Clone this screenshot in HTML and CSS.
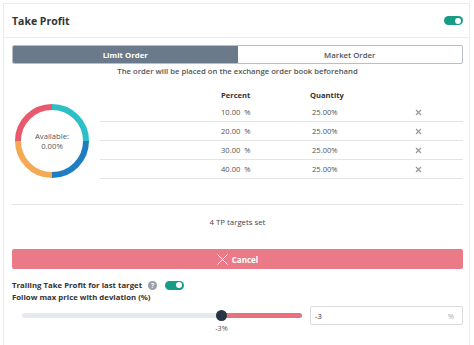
FILE: index.html
```html
<!DOCTYPE html>
<html lang="en">
<head>
    <meta charset="UTF-8">
    <title>Take Profit</title>
    <link rel="stylesheet" href="styles.css">
</head>
<body>
    <div class="card">
        <div class="card-header">
            <span class="card-title">Take Profit</span>
            <span class="toggle"></span>
        </div>
        <div class="card-body">
            <div class="tabs">
                <div class="tab active">Limit Order</div>
                <div class="tab">Market Order</div>
            </div>
            <p class="subtitle">The order will be placed on the exchange order book beforehand</p>

            <div class="targets">
                <div class="donut">
                    <svg width="74" height="74" viewBox="0 0 74 74">
                        <path d="M37 3 A34 34 0 0 1 71 37" fill="none" stroke="#2cbfc6" stroke-width="6"/>
                        <path d="M71 37 A34 34 0 0 1 37 71" fill="none" stroke="#1f7dc2" stroke-width="6"/>
                        <path d="M37 71 A34 34 0 0 1 3 37" fill="none" stroke="#f4aa55" stroke-width="6"/>
                        <path d="M3 37 A34 34 0 0 1 37 3" fill="none" stroke="#e8596d" stroke-width="6"/>
                    </svg>
                    <div class="donut-label">Available:<br>0.00%</div>
                </div>
                <div class="tp-table">
                    <div class="tp-row tp-head">
                        <span class="col-pct">Percent</span>
                        <span class="col-qty">Quantity</span>
                    </div>
                    <div class="tp-row">
                        <span class="col-pct">10.00 &nbsp;%</span>
                        <span class="col-qty">25.00%</span>
                        <span class="col-del"><svg width="7" height="7" viewBox="0 0 7 7"><path d="M1 1 L6 6 M6 1 L1 6" stroke="#999" stroke-width="1.2"/></svg></span>
                    </div>
                    <div class="tp-row">
                        <span class="col-pct">20.00 &nbsp;%</span>
                        <span class="col-qty">25.00%</span>
                        <span class="col-del"><svg width="7" height="7" viewBox="0 0 7 7"><path d="M1 1 L6 6 M6 1 L1 6" stroke="#999" stroke-width="1.2"/></svg></span>
                    </div>
                    <div class="tp-row">
                        <span class="col-pct">30.00 &nbsp;%</span>
                        <span class="col-qty">25.00%</span>
                        <span class="col-del"><svg width="7" height="7" viewBox="0 0 7 7"><path d="M1 1 L6 6 M6 1 L1 6" stroke="#999" stroke-width="1.2"/></svg></span>
                    </div>
                    <div class="tp-row">
                        <span class="col-pct">40.00 &nbsp;%</span>
                        <span class="col-qty">25.00%</span>
                        <span class="col-del"><svg width="7" height="7" viewBox="0 0 7 7"><path d="M1 1 L6 6 M6 1 L1 6" stroke="#999" stroke-width="1.2"/></svg></span>
                    </div>
                </div>
            </div>

            <div class="targets-count">4 TP targets set</div>

            <button class="cancel-btn">
                <svg width="11" height="11" viewBox="0 0 11 11"><path d="M0.5 0.5 L10.5 10.5 M10.5 0.5 L0.5 10.5" stroke="#fff" stroke-width="1"/></svg>
                Cancel
            </button>

            <div class="trailing">
                <span class="label">Trailing Take Profit for last target</span>
                <span class="help">?</span>
                <span class="toggle small"></span>
            </div>
            <div class="label">Follow max price with deviation (%)</div>

            <div class="deviation">
                <div class="slider">
                    <div class="track">
                        <div class="track-fill" style="width: 29%"></div>
                        <div class="thumb" style="left: 71%"></div>
                        <div class="thumb-value" style="left: 71%">-3%</div>
                    </div>
                </div>
                <div class="dev-input">
                    <span>-3</span>
                    <span class="unit">%</span>
                </div>
            </div>
        </div>
    </div>
</body>
</html>
```

FILE: styles.css
```css
body {
    margin: 0;
    background: #fff;
    font-family: 'Open Sans', sans-serif;
    color: #444;
}
.card {
    margin: 3px 4px 0 3px;
    border: 1px solid #ececec;
    border-bottom: none;
    height: 342px;
    box-sizing: border-box;
}
.card-header {
    height: 33px;
    display: flex;
    align-items: center;
    justify-content: space-between;
    padding: 0 6px 0 8px;
    border-bottom: 1px solid #ececec;
}
.card-title {
    font-size: 10.5px;
    font-weight: 700;
    color: #333;
}
.toggle {
    position: relative;
    width: 19px;
    height: 9px;
    border-radius: 5px;
    background: #189c86;
}
.toggle::after {
    content: '';
    position: absolute;
    right: 2px;
    top: 1.5px;
    width: 6px;
    height: 6px;
    border-radius: 50%;
    background: #fff;
}
.card-body {
    padding: 7px 6px 0 8px;
}
.tabs {
    display: flex;
    height: 19px;
    border: 1px solid #b9bec6;
    border-radius: 2px;
    box-sizing: border-box;
    overflow: hidden;
}
.tab {
    flex: 1;
    display: flex;
    align-items: center;
    justify-content: center;
    font-size: 7.8px;
    font-weight: 600;
    color: #555;
}
.tab.active {
    background: #6b7a8a;
    color: #fff;
    font-weight: 700;
}
.subtitle {
    margin: 0;
    height: 14px;
    line-height: 14px;
    text-align: center;
    font-size: 7.7px;
    font-weight: 600;
    color: #555;
}
.targets {
    display: flex;
    height: 126px;
    border-bottom: 1px solid #e4e4e4;
}
.donut {
    position: relative;
    width: 88px;
    padding: 26px 0 0 3px;
    box-sizing: border-box;
}
.donut svg {
    display: block;
}
.donut-label {
    position: absolute;
    left: 3px;
    top: 26px;
    width: 74px;
    height: 74px;
    display: flex;
    align-items: center;
    justify-content: center;
    text-align: center;
    font-size: 7.7px;
    line-height: 10px;
    color: #555;
}
.tp-table {
    flex: 1;
    padding-top: 9px;
}
.tp-row {
    display: flex;
    align-items: center;
    height: 19px;
    border-bottom: 1px solid #e4e4e4;
    box-sizing: border-box;
    font-size: 7.6px;
    color: #555;
}
.tp-row.tp-head {
    height: 16px;
    border-bottom: none;
    font-weight: 700;
    color: #333;
}
.col-pct {
    margin-left: 121px;
    width: 89px;
}
.tp-row .col-qty {
    width: 103px;
    padding-left: 2px;
}
.tp-head .col-qty {
    padding-left: 0;
}
.col-del {
    display: flex;
}
.targets-count {
    height: 44px;
    padding-top: 12px;
    box-sizing: border-box;
    text-align: center;
    line-height: 10px;
    font-size: 7.8px;
    color: #444;
}
.cancel-btn {
    display: flex;
    align-items: center;
    justify-content: center;
    gap: 4px;
    width: 100%;
    height: 20px;
    border: none;
    border-radius: 2px;
    background: #ea7a88;
    color: #fff;
    font-family: 'Open Sans', sans-serif;
    font-size: 8px;
    font-weight: 700;
    padding: 0;
}
.trailing {
    display: flex;
    align-items: center;
    margin-top: 10px;
    height: 12px;
}
.label {
    font-size: 7.8px;
    font-weight: 700;
    color: #333;
    height: 12px;
    line-height: 12px;
}
.help {
    width: 9px;
    height: 9px;
    border-radius: 50%;
    background: #9aa0a6;
    color: #fff;
    font-size: 6.5px;
    font-weight: 700;
    display: flex;
    align-items: center;
    justify-content: center;
    margin-left: 6px;
}
.toggle.small {
    margin-left: 8px;
}
.deviation {
    display: flex;
    align-items: flex-start;
}
.slider {
    width: 298px;
    padding: 10px 0 0 10px;
    box-sizing: border-box;
}
.track {
    position: relative;
    height: 5px;
    margin-right: 8px;
    border-radius: 3px;
    background: #e6e9ee;
}
.track-fill {
    position: absolute;
    right: 0;
    top: 0;
    height: 5px;
    border-radius: 3px;
    background: #e9707f;
}
.thumb {
    position: absolute;
    top: -3px;
    width: 11px;
    height: 11px;
    margin-left: -5px;
    border-radius: 50%;
    background: #263546;
}
.thumb-value {
    position: absolute;
    top: 10px;
    transform: translateX(-45%);
    font-size: 7.3px;
    color: #555;
}
.dev-input {
    flex: 1;
    height: 19px;
    margin-top: 3px;
    border: 1px solid #dcdcdc;
    border-radius: 2px;
    box-sizing: border-box;
    display: flex;
    align-items: center;
    justify-content: space-between;
    padding: 0 8px 0 4px;
    font-size: 7.6px;
    color: #333;
}
.dev-input .unit {
    color: #aaa;
}
```
